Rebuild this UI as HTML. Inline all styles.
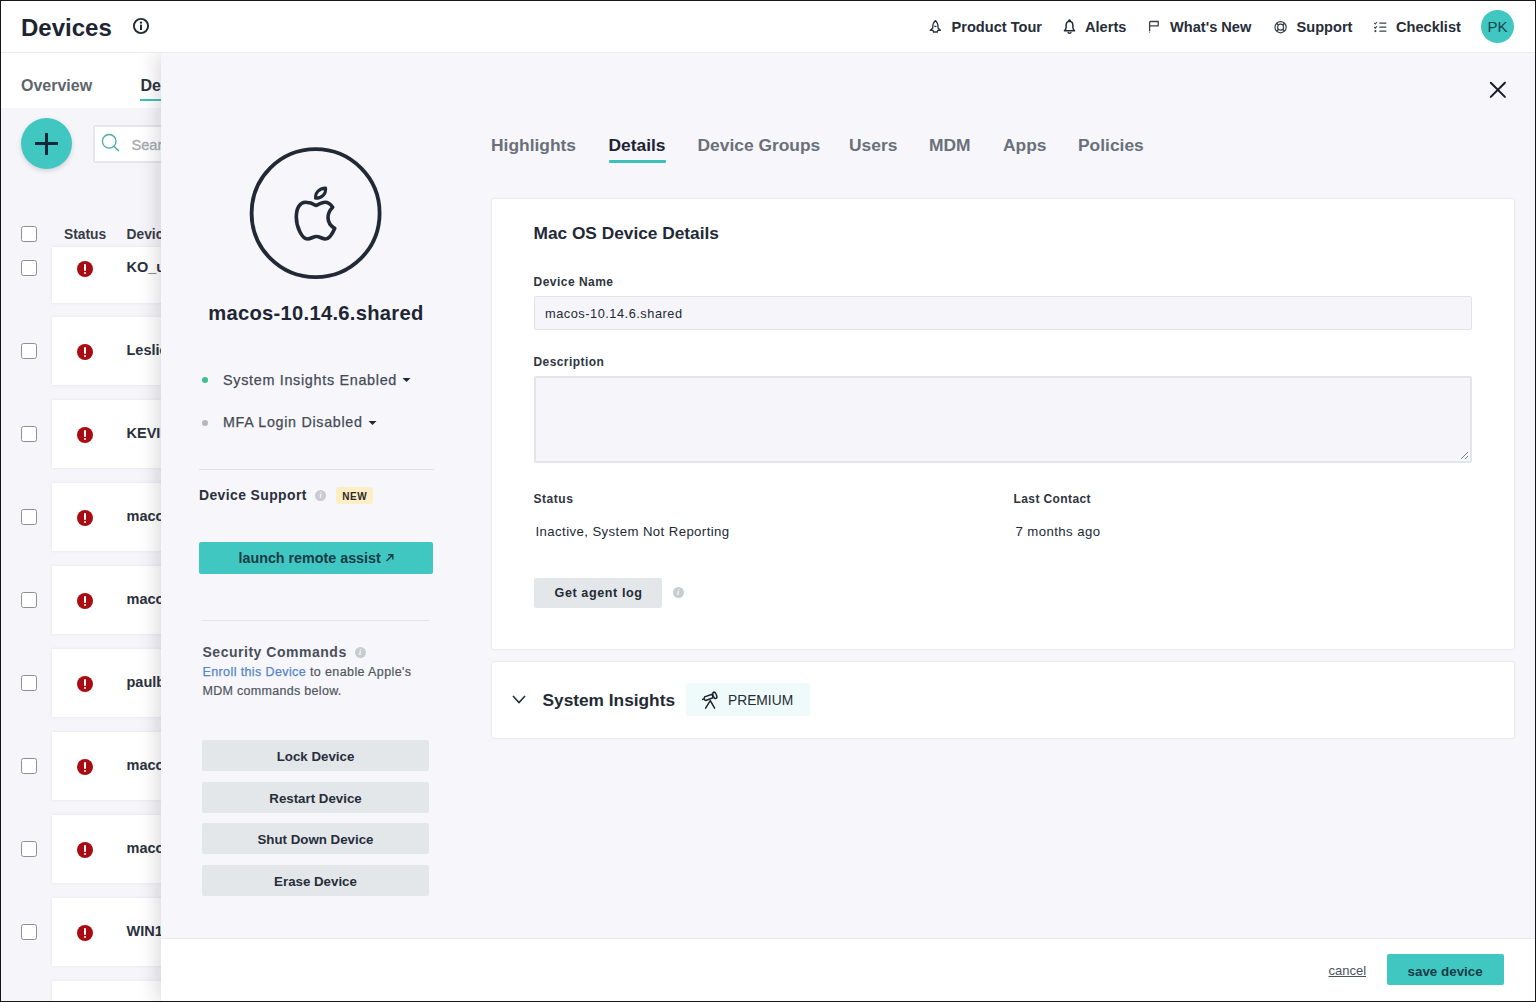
<!DOCTYPE html>
<html><head><meta charset="utf-8">
<style>
*{box-sizing:border-box;margin:0;padding:0}
html,body{width:1536px;height:1002px;overflow:hidden;background:#fff}
body{position:relative;font-family:"Liberation Sans",sans-serif;color:#1f2633}
.a{position:absolute}
.t{position:absolute;white-space:nowrap;line-height:1}
.b{font-weight:bold}
#frame{position:absolute;left:0;top:0;width:1536px;height:1002px;border:1px solid #161616;z-index:100;pointer-events:none}
/* header */
#hdr{left:0;top:0;width:1536px;height:53px;background:#fff;border-bottom:1px solid #e9eaee;z-index:20}
.nav{font-size:14.6px;font-weight:bold;color:#272d38}
/* gray area */
#gray{left:0;top:108px;width:1536px;height:894px;background:#f6f5fa}
.cb{position:absolute;width:16px;height:16px;border:1.7px solid #8d9095;border-radius:2.5px;background:#fff}
.card{position:absolute;left:51.5px;width:160px;background:#fff;box-shadow:0 0 3px rgba(40,40,70,.09)}
.err{position:absolute;left:76.7px;width:16.3px;height:16.3px;border-radius:50%;background:#a80c12}
.err:before{content:"";position:absolute;left:7.05px;top:3.4px;width:2.2px;height:6.3px;background:#fff;border-radius:1px}
.err:after{content:"";position:absolute;left:6.95px;top:10.8px;width:2.4px;height:2.4px;background:#fff;border-radius:50%}
.rn{position:absolute;left:126.5px;font-size:14.5px;font-weight:bold;color:#2b313c;white-space:nowrap;line-height:1}
/* drawer */
#drawer{left:161px;top:53px;width:1375px;height:949px;background:#f7f6fb;box-shadow:-4px 0 18px rgba(25,25,40,.16);z-index:10}
#foot{left:0;top:885px;width:1375px;height:64px;background:#fff;border-top:1px solid #e8e9ed}
.tab{font-size:17.4px;font-weight:bold;color:#6a7079}
.gbtn{position:absolute;left:41px;width:227px;height:31px;background:#e4e7e9;border-radius:2px;font-size:13.3px;font-weight:bold;color:#272e3b;text-align:center;line-height:33px}
.lbl{font-size:12px;font-weight:bold;color:#2f3540}
.info{position:absolute;width:11px;height:11px;border-radius:50%;background:#c9cbd0}
.info:after{content:"i";position:absolute;left:0;top:0;width:11px;text-align:center;font:italic bold 9px/11px "Liberation Serif",serif;color:#f6f6f9}
</style></head><body>
<div id="frame"></div>

<!-- HEADER -->
<div id="hdr" class="a">
  <div class="t b" style="left:21px;top:15.5px;font-size:24px;color:#1d2432">Devices</div>
  <svg class="a" style="left:132px;top:17px" width="18" height="18" viewBox="0 0 18 18"><circle cx="9" cy="9" r="7.1" fill="none" stroke="#232a36" stroke-width="1.9"/><circle cx="9" cy="5.6" r="1.2" fill="#232a36"/><rect x="8" y="7.6" width="2" height="5.4" fill="#232a36"/></svg>
  <!-- rocket -->
  <svg class="a" style="left:928px;top:19px" width="15" height="15" viewBox="0 0 15 15" fill="none" stroke="#2b313c" stroke-width="1.3" stroke-linejoin="round"><path d="M7.4 1.6 C5.5 3.3 4.7 5.7 4.7 8.4 L4.7 9.2 L2.3 11.3 L5.1 11.3 L5.5 13 L9.3 13 L9.7 11.3 L12.5 11.3 L10.1 9.2 L10.1 8.4 C10.1 5.7 9.3 3.3 7.4 1.6 Z"/><path d="M6.3 7.4 H8.5"/></svg>
  <div class="t nav" style="left:951.5px;top:19.6px">Product Tour</div>
  <!-- bell -->
  <svg class="a" style="left:1062px;top:18.5px" width="15" height="16" viewBox="0 0 15 16" fill="none" stroke="#232a36" stroke-width="1.5" stroke-linejoin="round"><path d="M7.5 2.3 C5.1 2.3 4.1 4.2 4.1 6.5 L4.1 8.4 C4.1 9.7 3.4 10.8 2.4 11.8 L12.6 11.8 C11.6 10.8 10.9 9.7 10.9 8.4 L10.9 6.5 C10.9 4.2 9.9 2.3 7.5 2.3 Z"/><path d="M5.9 13.2 C6.2 14.7 8.8 14.7 9.1 13.2"/><circle cx="7.5" cy="1.7" r=".8" fill="#232a36"/></svg>
  <div class="t nav" style="left:1085px;top:19.6px">Alerts</div>
  <!-- flag -->
  <svg class="a" style="left:1147px;top:19px" width="14" height="15" viewBox="0 0 14 15" fill="none" stroke="#3a404a" stroke-width="1.3"><path d="M2.6 12 V3.5 C2.6 2.9 3 2.5 3.6 2.5 H11.2 V6.9 H2.6"/><circle cx="2.6" cy="13" r=".6" fill="#3a404a" stroke="none"/></svg>
  <div class="t nav" style="left:1170px;top:19.6px">What's New</div>
  <!-- lifebuoy -->
  <svg class="a" style="left:1273px;top:19.5px" width="15" height="15" viewBox="0 0 15 15" fill="none" stroke="#3a404a" stroke-width="1.2"><circle cx="7.6" cy="7.2" r="5.6"/><circle cx="7.6" cy="7.2" r="3"/><path d="M3.6 3.2 L5.5 5.1 M11.6 3.2 L9.7 5.1 M3.6 11.2 L5.5 9.3 M11.6 11.2 L9.7 9.3" stroke-width="1.6"/></svg>
  <div class="t nav" style="left:1296.5px;top:19.6px">Support</div>
  <!-- checklist -->
  <svg class="a" style="left:1372px;top:19.7px" width="16" height="15" viewBox="0 0 16 15" fill="none" stroke="#3a404a" stroke-width="1.25" stroke-linecap="round"><path d="M7.8 3 H13.9 M7.8 7.1 H13.9 M7.8 11.1 H13.9"/><path d="M2.6 3.4 L3.3 4 L4.5 2.5 M2.6 7.5 L3.3 8.1 L4.5 6.6" stroke-width="1.2"/><circle cx="3.4" cy="11.1" r="1.1" fill="#3a404a" stroke="none"/></svg>
  <div class="t nav" style="left:1396px;top:19.6px">Checklist</div>
  <div class="a" style="left:1481px;top:10px;width:33px;height:33px;border-radius:50%;background:#41c7c1;color:#0f4650;font-size:15px;line-height:34px;text-align:center">PK</div>
</div>

<!-- TABS AREA -->
<div class="t b" style="left:21px;top:78px;font-size:16px;color:#5e646c">Overview</div>
<div class="t b" style="left:140.5px;top:78px;font-size:16px;color:#2c333e">Devices</div>
<div class="a" style="left:140px;top:98.5px;width:60px;height:2.5px;background:#3cc1ba"></div>

<!-- GRAY AREA -->
<div id="gray" class="a"></div>
<div class="a" style="left:21px;top:118px;width:51px;height:51px;border-radius:50%;background:#41c7c1;box-shadow:0 2px 5px rgba(0,0,0,.15)"></div>
<div class="a" style="left:35.2px;top:142.2px;width:22.4px;height:3px;background:#10293a"></div>
<div class="a" style="left:44.9px;top:132.5px;width:3px;height:22.4px;background:#10293a"></div>
<div class="a" style="left:93px;top:124.5px;width:120px;height:38px;background:#fff;border:2px solid #e5e7ea;border-radius:2px"></div>
<svg class="a" style="left:100px;top:132px" width="22" height="22" viewBox="0 0 22 22" fill="none" stroke="#4baba3" stroke-width="1.35"><circle cx="9.2" cy="9.3" r="6.8"/><path d="M14 14.2 L18.6 18.8" stroke-linecap="round"/></svg>
<div class="t" style="left:131.5px;top:137.5px;font-size:14.6px;color:#a6a9ad;-webkit-text-stroke:.3px #a6a9ad">Search</div>

<div class="cb" style="left:21px;top:225.5px"></div>
<div class="t b" style="left:64px;top:227.8px;font-size:13.8px;color:#363c47">Status</div>
<div class="t b" style="left:126.5px;top:227.8px;font-size:13.8px;color:#363c47">Device</div>

<div class="card" style="top:247.3px;height:55.6px"></div>
<div class="cb" style="left:21px;top:260.20px"></div><div class="err" style="top:261.05px"></div><div class="rn" style="top:259.80px">KO_user</div>
<div class="card" style="top:316.60px;height:68.6px"></div>
<div class="cb" style="left:21px;top:343.20px"></div><div class="err" style="top:344.05px"></div><div class="rn" style="top:342.80px">Leslie</div>
<div class="card" style="top:399.60px;height:68.6px"></div>
<div class="cb" style="left:21px;top:426.20px"></div><div class="err" style="top:427.05px"></div><div class="rn" style="top:425.80px">KEVIN</div>
<div class="card" style="top:482.60px;height:68.6px"></div>
<div class="cb" style="left:21px;top:509.20px"></div><div class="err" style="top:510.05px"></div><div class="rn" style="top:508.80px">macos</div>
<div class="card" style="top:565.60px;height:68.6px"></div>
<div class="cb" style="left:21px;top:592.20px"></div><div class="err" style="top:593.05px"></div><div class="rn" style="top:591.80px">macos</div>
<div class="card" style="top:648.60px;height:68.6px"></div>
<div class="cb" style="left:21px;top:675.20px"></div><div class="err" style="top:676.05px"></div><div class="rn" style="top:674.80px">paulb</div>
<div class="card" style="top:731.60px;height:68.6px"></div>
<div class="cb" style="left:21px;top:758.20px"></div><div class="err" style="top:759.05px"></div><div class="rn" style="top:757.80px">macos</div>
<div class="card" style="top:814.60px;height:68.6px"></div>
<div class="cb" style="left:21px;top:841.20px"></div><div class="err" style="top:842.05px"></div><div class="rn" style="top:840.80px">macos</div>
<div class="card" style="top:897.60px;height:68.6px"></div>
<div class="cb" style="left:21px;top:924.20px"></div><div class="err" style="top:925.05px"></div><div class="rn" style="top:923.80px">WIN10</div>
<div class="card" style="top:980.60px;height:68.6px"></div>

<!-- DRAWER -->
<div id="drawer" class="a">
 <div id="foot" class="a"></div>
 <div class="a" style="left:-161px;top:-53px;width:1536px;height:1002px">
  <!-- close -->
  <svg class="a" style="left:1488px;top:80px" width="20" height="20" viewBox="0 0 20 20" stroke="#161b26" stroke-width="2" stroke-linecap="round"><path d="M2.8 2.8 L16.9 16.9 M16.9 2.8 L2.8 16.9"/></svg>

  <!-- device circle -->
  <svg class="a" style="left:240px;top:138px" width="152" height="152" viewBox="240 138 152 152" fill="none" stroke="#222936">
    <circle cx="315.6" cy="213.2" r="64" stroke-width="3.8"/>
    <path stroke-width="3.6" stroke-linejoin="round" d="M316,205.5 C312,203 309,202.3 305.5,202.3 C300,202.3 296.3,208 296.3,217 C296.3,227 302,239 307.5,239 C311,239 313,236.5 316.5,236.5 C320,236.5 322,239 325.5,239 C329.5,239 333,232.5 334.8,228.3 C330.5,226 328,222 328,217.5 C328,213 330,210 332.7,207.3 C330.5,204 328,202.3 325,202.3 C322,202.3 319,204 316,205.5 Z"/>
    <path stroke-width="3.1" stroke-linejoin="round" d="M315.6,198.3 C315,192.6 319,188.5 325.6,188.1 C326.1,193.9 322,198.1 315.6,198.3 Z"/>
  </svg>
  <div class="t b" style="left:208.3px;top:302.9px;font-size:20.2px;letter-spacing:.27px;color:#1f2633">macos-10.14.6.shared</div>

  <div class="a" style="left:202.3px;top:377.3px;width:6px;height:6px;border-radius:50%;background:#3bbf8f"></div>
  <div class="t" style="left:223px;top:373.1px;font-size:14.4px;letter-spacing:.68px;color:#454b55;-webkit-text-stroke:.25px #454b55">System Insights Enabled</div>
  <svg class="a" style="left:402px;top:377px" width="9" height="6" viewBox="0 0 9 6"><path d="M0.5 1 L8.5 1 L4.5 5 Z" fill="#1f2633"/></svg>
  <div class="a" style="left:202.3px;top:419.8px;width:6px;height:6px;border-radius:50%;background:#b4b7bc"></div>
  <div class="t" style="left:223px;top:415.1px;font-size:14.3px;letter-spacing:.69px;color:#454b55;-webkit-text-stroke:.25px #454b55">MFA Login Disabled</div>
  <svg class="a" style="left:367.5px;top:419.5px" width="9" height="6" viewBox="0 0 9 6"><path d="M0.5 1 L8.5 1 L4.5 5 Z" fill="#1f2633"/></svg>

  <div class="a" style="left:199px;top:469px;width:234.5px;height:1px;background:#e1e2e6"></div>
  <div class="t b" style="left:199px;top:488.6px;font-size:13.9px;letter-spacing:.42px;color:#2a303b">Device Support</div>
  <div class="info" style="left:315px;top:490px"></div>
  <div class="a" style="left:336px;top:486.5px;width:36.5px;height:17px;background:#fdeec6;border-radius:3px;font-size:10px;font-weight:bold;color:#2b2a26;text-align:center;line-height:19px;letter-spacing:.5px;padding-left:1px">NEW</div>
  <div class="a" style="left:199px;top:541.5px;width:234px;height:32.5px;background:#41c7c1;border-radius:2px"></div>
  <div class="t b" style="left:238.5px;top:550.5px;font-size:14.3px;color:#163a47">launch remote assist</div>
  <svg class="a" style="left:384.5px;top:552.5px" width="10" height="10" viewBox="0 0 10 10" fill="none" stroke="#163a47" stroke-width="1.4"><path d="M1.5 8 L7.8 1.7 M3 1.7 H7.8 V6.5"/></svg>

  <div class="a" style="left:202px;top:620px;width:227px;height:1px;background:#e6e7ea"></div>
  <div class="t b" style="left:202.5px;top:645.3px;font-size:14px;letter-spacing:.52px;color:#4a5059">Security Commands</div>
  <div class="info" style="left:354.5px;top:647px"></div>
  <div class="t" style="left:202.5px;top:666.3px;font-size:12.5px;letter-spacing:.39px;color:#50565e;-webkit-text-stroke:.2px #50565e"><span style="color:#5486cc;-webkit-text-stroke:.25px #5486cc">Enroll this Device</span> to enable Apple's</div>
  <div class="t" style="left:202.5px;top:684.9px;font-size:12.5px;letter-spacing:.3px;color:#50565e;-webkit-text-stroke:.2px #50565e">MDM commands below.</div>

  <div class="gbtn" style="left:202px;top:739.5px">Lock Device</div>
  <div class="gbtn" style="left:202px;top:781.5px">Restart Device</div>
  <div class="gbtn" style="left:202px;top:823.3px">Shut Down Device</div>
  <div class="gbtn" style="left:202px;top:865.1px">Erase Device</div>

  <!-- tabs -->
  <div class="t tab" style="left:491px;top:137.2px">Highlights</div>
  <div class="t tab" style="left:608.5px;top:137.2px;color:#1c2333">Details</div>
  <div class="a" style="left:608.5px;top:159.5px;width:57px;height:3px;background:#3cc1ba;border-radius:1px"></div>
  <div class="t tab" style="left:697.5px;top:137.2px">Device Groups</div>
  <div class="t tab" style="left:849px;top:137.2px">Users</div>
  <div class="t tab" style="left:929px;top:137.2px">MDM</div>
  <div class="t tab" style="left:1003px;top:137.2px">Apps</div>
  <div class="t tab" style="left:1078px;top:137.2px">Policies</div>

  <!-- details card -->
  <div class="a" style="left:491.5px;top:198.5px;width:1022px;height:450.5px;background:#fff;border-radius:2px;box-shadow:0 0 0 1px #ebebf0,0 0 4px rgba(30,30,60,.06)"></div>
  <div class="t b" style="left:533.5px;top:225px;font-size:17.3px;color:#222936">Mac OS Device Details</div>
  <div class="t lbl" style="left:533.5px;top:275.6px;letter-spacing:.48px">Device Name</div>
  <div class="a" style="left:533.5px;top:296px;width:938px;height:33.5px;background:#f6f6fa;border:1px solid #e2e4e8;border-radius:2px"></div>
  <div class="t" style="left:545px;top:307.9px;font-size:12.8px;letter-spacing:.51px;color:#222936">macos-10.14.6.shared</div>
  <div class="t lbl" style="left:533.5px;top:355.8px;letter-spacing:.42px">Description</div>
  <div class="a" style="left:533.5px;top:376px;width:938px;height:86.5px;background:#f6f6fa;border:2px solid #e3e5e9;border-radius:2px"></div>
  <svg class="a" style="left:1459px;top:450px" width="10" height="10" viewBox="0 0 10 10" stroke="#7d8288" stroke-width="1"><path d="M2 9 L9 2 M6 9 L9 6"/></svg>
  <div class="t lbl" style="left:533.5px;top:493.4px;letter-spacing:.54px">Status</div>
  <div class="t" style="left:535.5px;top:525.4px;font-size:13.2px;letter-spacing:.41px;color:#222936">Inactive, System Not Reporting</div>
  <div class="t lbl" style="left:1013.5px;top:493.2px;letter-spacing:.4px">Last Contact</div>
  <div class="t" style="left:1015.5px;top:525.4px;font-size:13.2px;letter-spacing:.42px;color:#222936">7 months ago</div>
  <div class="a" style="left:533.5px;top:577.5px;width:128.5px;height:30.5px;background:#e4e7e9;border-radius:2px"></div>
  <div class="t b" style="left:554.5px;top:587.4px;font-size:12.6px;letter-spacing:.59px;color:#232a36">Get agent log</div>
  <div class="info" style="left:672.5px;top:586.5px"></div>

  <!-- system insights card -->
  <div class="a" style="left:491.5px;top:661.5px;width:1022px;height:76.5px;background:#fff;border-radius:2px;box-shadow:0 0 0 1px #ebebf0,0 0 4px rgba(30,30,60,.06)"></div>
  <svg class="a" style="left:511px;top:693px" width="16" height="13" viewBox="0 0 16 13" fill="none" stroke="#262c38" stroke-width="1.6"><path d="M2 3 L8 9.5 L14 3"/></svg>
  <div class="t b" style="left:542.5px;top:692px;font-size:17.3px;color:#232a36">System Insights</div>
  <div class="a" style="left:685.5px;top:683.3px;width:124px;height:33px;background:#effafb;border-radius:3px"></div>
  <svg class="a" style="left:701px;top:690px" width="19" height="20" viewBox="0 0 19 20" fill="none" stroke="#1d2430" stroke-width="1.5" stroke-linecap="round" stroke-linejoin="round"><path d="M1.6 9.4 L3.2 8.6 L3.6 6.9 L11.2 4.2 L12.1 7.8 L4.6 10.5 L3.4 9.6"/><ellipse cx="13.8" cy="5.3" rx="1.7" ry="3.3" transform="rotate(-22 13.8 5.3)"/><path d="M9.3 10.6 L4.6 18.2 M9.3 10.6 L13.6 18.2"/></svg>
  <div class="t" style="left:728px;top:694px;font-size:13.8px;color:#262c38">PREMIUM</div>

  <!-- footer -->
  <div class="t" style="left:1328.5px;top:963.5px;font-size:13px;color:#4c525b;text-decoration:underline">cancel</div>
  <div class="a" style="left:1387px;top:954.3px;width:117px;height:30.7px;background:#41c7c1;border-radius:2px"></div>
  <div class="t b" style="left:1407.5px;top:965px;font-size:13.4px;color:#173b48">save device</div>
 </div>
</div>
</body></html>
